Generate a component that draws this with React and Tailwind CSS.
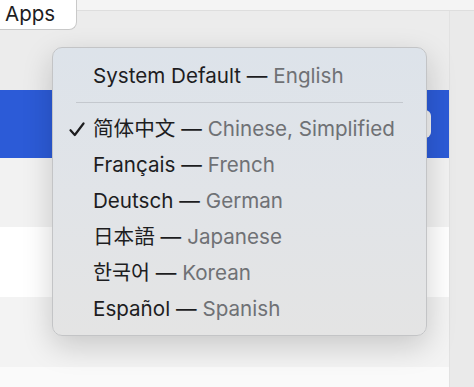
const items = [
  { native: '简体中文', en: 'Chinese, Simplified', checked: true },
  { native: 'Français', en: 'French' },
  { native: 'Deutsch', en: 'German' },
  { native: '日本語', en: 'Japanese' },
  { native: '한국어', en: 'Korean' },
  { native: 'Español', en: 'Spanish' },
]

const font = { fontFamily: 'Inter, "Noto Sans CJK SC", "Noto Sans CJK KR", sans-serif' }

function MenuRow({ native, en, checked }) {
  return (
    <div className="relative flex h-[36px] items-center pl-[40px] text-[20.6px] leading-none">
      {checked && (
        <svg className="absolute left-[16px] top-[11px] h-[15px] w-[16px]" viewBox="0 0 16 15" fill="none">
          <path d="M1.5 8.2 L5.8 13 L14.5 1.5" stroke="#1d1d1f" strokeWidth="2.2" strokeLinecap="round" strokeLinejoin="round" />
        </svg>
      )}
      <span className="text-[#1d1d1f]">{native} —</span>
      <span className="ml-[6px] text-[#6f7175]">{en}</span>
    </div>
  )
}

export default function App() {
  return (
    <div className="relative h-[387px] w-[474px] overflow-hidden bg-white" style={font}>
      <div className="h-[11px] border-b border-[#dedede] bg-[#f4f4f4]" />
      <div className="flex h-[376px]">
        <div className="flex w-[449px] flex-col">
          <div className="h-[79px] bg-[#ececec]" />
          <div className="relative h-[68px] bg-[#2c5bd7]">
            <div className="absolute right-[18px] top-[20px] h-[28px] w-[14px] rounded-[6px] bg-[#f1f1f1]" />
          </div>
          <div className="h-[69px] bg-[#f2f2f2]" />
          <div className="h-[70px] bg-white" />
          <div className="h-[70px] bg-[#f3f3f3]" />
          <div className="flex-1 bg-[#fafafa]" />
        </div>
        <div className="flex-1 border-l border-[#e2e2e2] bg-[#eaeaea]" />
      </div>

      <div className="absolute left-0 top-0 flex h-[30px] w-[77px] items-center rounded-br-[8px] border-b border-r border-[#c9c9c9] bg-white pl-[5px] text-[20.5px] text-[#1d1d1f]">
        Apps
      </div>

      <div className="absolute left-[52px] top-[47px] w-[375px] rounded-[10px] border border-[#c3c4c6] bg-gradient-to-b from-[#dde3ea] via-[#e1e4e8] to-[#e4e4e4] pb-[8px] pt-[10px] shadow-[0_10px_30px_rgba(0,0,0,0.18)]">
        <div className="flex h-[36px] items-center pl-[40px] text-[20.6px] leading-none">
          <span className="text-[#1d1d1f]">System Default —</span>
          <span className="ml-[6px] text-[#6f7175]">English</span>
        </div>
        <div className="flex h-[17px] items-center px-[23px]">
          <div className="h-px w-full bg-[#c4c8ce]" />
        </div>
        {items.map((it) => (
          <MenuRow key={it.en} {...it} />
        ))}
      </div>
    </div>
  )
}
